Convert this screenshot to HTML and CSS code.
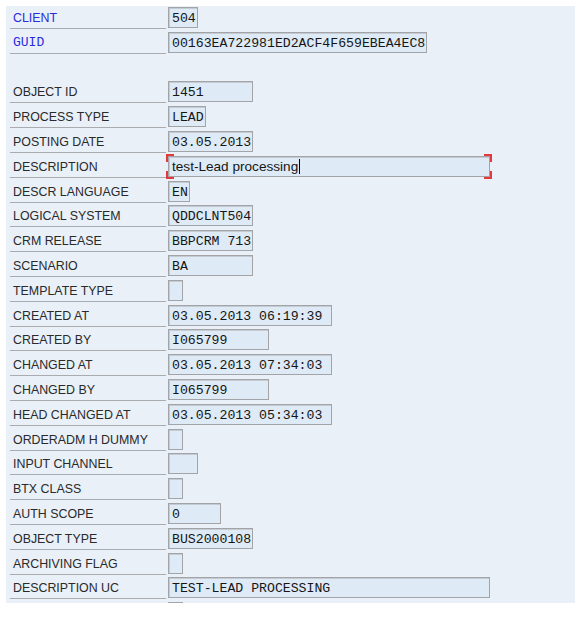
FILE: index.html
```html
<!DOCTYPE html>
<html>
<head>
<meta charset="utf-8">
<link rel="stylesheet" href="styles.css">
</head>
<body>
<div class="panel">
  <div class="row"><div class="label blue">CLIENT</div><div class="field w3">504</div></div>
  <div class="row"><div class="label blue mono">GUID</div><div class="field w32">00163EA722981ED2ACF4F659EBEA4EC8</div></div>
  <div class="row"></div>
  <div class="row"><div class="label">OBJECT ID</div><div class="field w10">1451</div></div>
  <div class="row"><div class="label">PROCESS TYPE</div><div class="field w4">LEAD</div></div>
  <div class="row"><div class="label">POSTING DATE</div><div class="field w10">03.05.2013</div></div>
  <div class="row"><div class="label">DESCRIPTION</div><div class="field wide sans focus">test-Lead processing<span class="caret"></span><span class="br tl"></span><span class="br tr"></span><span class="br bl"></span><span class="br brc"></span></div></div>
  <div class="row"><div class="label">DESCR LANGUAGE</div><div class="field w2">EN</div></div>
  <div class="row"><div class="label">LOGICAL SYSTEM</div><div class="field w10">QDDCLNT504</div></div>
  <div class="row"><div class="label">CRM RELEASE</div><div class="field w10">BBPCRM 713</div></div>
  <div class="row"><div class="label">SCENARIO</div><div class="field w10">BA</div></div>
  <div class="row"><div class="label">TEMPLATE TYPE</div><div class="field w1"></div></div>
  <div class="row"><div class="label">CREATED AT</div><div class="field w19">03.05.2013 06:19:39</div></div>
  <div class="row"><div class="label">CREATED BY</div><div class="field w12">I065799</div></div>
  <div class="row"><div class="label">CHANGED AT</div><div class="field w19">03.05.2013 07:34:03</div></div>
  <div class="row"><div class="label">CHANGED BY</div><div class="field w12">I065799</div></div>
  <div class="row"><div class="label">HEAD CHANGED AT</div><div class="field w19">03.05.2013 05:34:03</div></div>
  <div class="row"><div class="label">ORDERADM H DUMMY</div><div class="field w1"></div></div>
  <div class="row"><div class="label">INPUT CHANNEL</div><div class="field w3"></div></div>
  <div class="row"><div class="label">BTX CLASS</div><div class="field w1"></div></div>
  <div class="row"><div class="label">AUTH SCOPE</div><div class="field w6">0</div></div>
  <div class="row"><div class="label">OBJECT TYPE</div><div class="field w10">BUS2000108</div></div>
  <div class="row"><div class="label">ARCHIVING FLAG</div><div class="field w1"></div></div>
  <div class="row"><div class="label">DESCRIPTION UC</div><div class="field wide">TEST-LEAD PROCESSING</div></div>
  <div class="row"><div class="label"></div><div class="field w1"></div></div>
</div>
</body>
</html>
```

FILE: styles.css
```css
html, body {
  margin: 0;
  padding: 0;
  background: #ffffff;
}

.panel {
  margin: 6px 0 0 6px;
  width: 569px;
  height: 597px;
  overflow: hidden;
  background: #e9f0f8;
}

.row {
  display: flex;
  align-items: flex-start;
  height: 24.8px;
}

.label {
  box-sizing: border-box;
  width: 156px;
  height: 23px;
  margin-left: 4px;
  padding-left: 3px;
  border-bottom: 1px solid #a9abae;
  font-family: "Liberation Sans", Arial, sans-serif;
  font-size: 12.4px;
  line-height: 24px;
  color: #2a2a2a;
  white-space: nowrap;
}

.label.blue {
  color: #2b2bdc;
}

.label.mono {
  font-family: "Liberation Mono", "Courier New", monospace;
  font-size: 13px;
}

.field {
  position: relative;
  box-sizing: border-box;
  height: 21px;
  margin-top: 1px;
  margin-left: 2px;
  padding-left: 3px;
  border: 1px solid #a2a4a7;
  box-shadow: inset 1px 1px 0 #c4cbd2;
  background: #deeaf5;
  font-family: "Liberation Mono", "Courier New", monospace;
  font-size: 13.2px;
  line-height: 21px;
  color: #161616;
  white-space: nowrap;
}

.w1 { width: 15px; }
.w2 { width: 22px; }
.w3 { width: 30px; }
.w4 { width: 38px; }
.w6 { width: 53px; }
.w10 { width: 85px; }
.w12 { width: 101px; }
.w19 { width: 164px; }
.w32 { width: 259px; }
.wide { width: 322px; }

.field.sans {
  font-family: "Liberation Sans", Arial, sans-serif;
  font-size: 13.6px;
  line-height: 20px;
}

.caret {
  display: inline-block;
  width: 1px;
  height: 15px;
  background: #000;
  vertical-align: -3px;
  margin-left: 1px;
}

.br {
  position: absolute;
  width: 6px;
  height: 6px;
  border: 0 solid #e4393b;
}

.br.tl { left: -3px; top: -3px; border-top-width: 2px; border-left-width: 2px; }
.br.tr { right: -3px; top: -3px; border-top-width: 2px; border-right-width: 2px; }
.br.bl { left: -3px; bottom: -3px; border-bottom-width: 2px; border-left-width: 2px; }
.br.brc { right: -3px; bottom: -3px; border-bottom-width: 2px; border-right-width: 2px; }
```
